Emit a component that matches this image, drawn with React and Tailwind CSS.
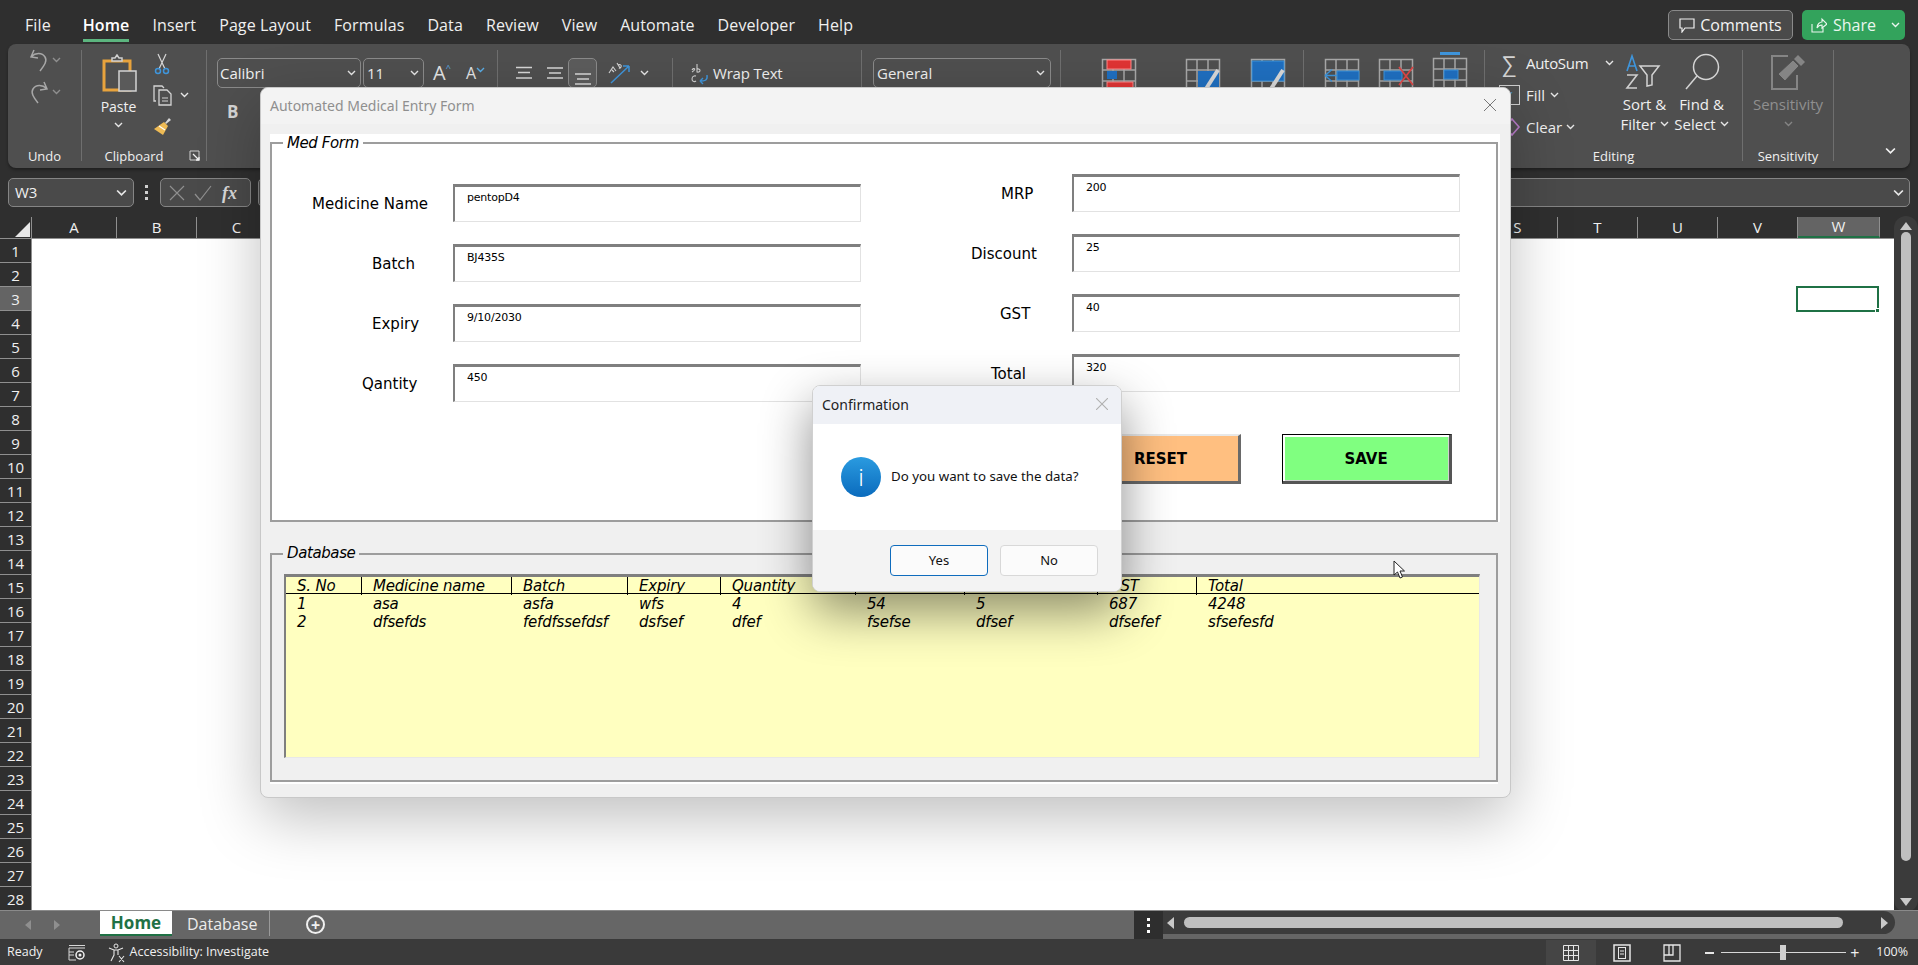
const tabs = ["File", "Home", "Insert", "Page Layout", "Formulas", "Data", "Review", "View", "Automate", "Developer", "Help"];
const columns = "ABCDEFGHIJKLMNOPQRSTUVW".split("");
const rows = Array.from({ length: 28 }, (_, i) => i + 1);

const leftFields = [
  { label: "Medicine Name", value: "pentopD4", indent: "ml-[40px]" },
  { label: "Batch", value: "BJ435S", indent: "ml-[100px]" },
  { label: "Expiry", value: "9/10/2030", indent: "ml-[100px]" },
  { label: "Qantity", value: "450", indent: "ml-[90px]" }
];
const rightFields = [
  { label: "MRP", value: "200", indent: "ml-[140px]" },
  { label: "Discount", value: "25", indent: "ml-[110px]" },
  { label: "GST", value: "40", indent: "ml-[139px]" },
  { label: "Total", value: "320", indent: "ml-[130px]" }
];
const tableHead = ["S. No", "Medicine name", "Batch", "Expiry", "Quantity", "MRP", "Discount", "GST", "Total"];
const tableRows = [
  ["1", "asa", "asfa", "wfs", "4", "54", "5", "687", "4248"],
  ["2", "dfsefds", "fefdfssefdsf", "dsfsef", "dfef", "fsefse", "dfsef", "dfsefef", "sfsefesfd"]
];

const Chevron = ({ className = "", color = "#e6e6e6" }) => (
  <svg width="9" height="6" viewBox="0 0 9 6" className={className} fill="none">
    <path d="M1 1l3.5 3.5L8 1" stroke={color} strokeWidth="1.4" />
  </svg>
);

const GridIcon = ({ children }) => (
  <svg width="38" height="36" viewBox="0 0 38 36" fill="none" className="shrink-0">
    <rect x="2.5" y="1.5" width="33" height="32" stroke="#a8a8a8" strokeWidth="1.5" />
    <path d="M2 12h34M2 23h34M13 1v33M24 1v33" stroke="#a8a8a8" strokeWidth="1.5" />
    {children}
  </svg>
);

const Group = ({ width, label, launcher, children }) => (
  <div className={`flex h-[111px] shrink-0 flex-col border-r border-[#6f6f6f] ${width}`}>
    <div className="min-h-0 flex-1">{children}</div>
    <div className="-mb-[3px] flex h-[16px] items-center text-[13px] leading-none text-[#f0f0f0]">
      <span className="flex-1 text-center">{label}</span>
      {launcher}
    </div>
  </div>
);

const Ribbon = () => (
  <div className="mx-2 flex h-[124px] shrink-0 rounded-lg bg-[#4f4f4f] pt-[6px] shadow-[0_2px_3px_rgba(0,0,0,0.35)]">
    <Group width="w-[74px]" label="Undo">
      <div className="flex h-[20px] items-center pl-[21px]">
        <svg width="20" height="24" viewBox="0 0 20 24" fill="none"><path d="M5 2L2 9l7 1M2.500 8.500C6 5 13 4 16 9c2.500 4-.5 8-5 14" stroke="#a8a8a8" strokeWidth="1.500" /></svg>
        <Chevron className="ml-[3px]" color="#8f8f8f" />
      </div>
      <div className="mt-[12px] flex h-[20px] items-center pl-[21px]">
        <svg width="20" height="24" viewBox="0 0 20 24" fill="none"><path d="M15 2l3 7-7 1M17.500 8.500C14 5 7 4 4 9c-2.500 4 .5 8 5 14" stroke="#a8a8a8" strokeWidth="1.500" /></svg>
        <Chevron className="ml-[3px]" color="#8f8f8f" />
      </div>
    </Group>
    <Group
      width="w-[125px]"
      label="Clipboard"
      launcher={
        <svg width="20" height="14" viewBox="0 0 20 14" fill="none" className="shrink-0">
          <path d="M4 2h9v9H4z" stroke="#d0d0d0" /><path d="M7 5l6 6M13 8v3h-3" stroke="#f0f0f0" strokeWidth="1.300" />
        </svg>
      }
    >
      <div className="flex">
        <div className="flex w-[73px] flex-col items-center pt-[4px]">
          <svg width="36" height="38" viewBox="0 0 36 38" fill="none" className="ml-[3px]">
            <rect x="2" y="7" width="26" height="29" stroke="#e8a33d" strokeWidth="3" fill="#4f4f4f" />
            <path d="M10 7V4h3l2-3 2 3h3v3z" stroke="#d0d0d0" strokeWidth="1.500" fill="#4f4f4f" />
            <rect x="17" y="17" width="17" height="20" fill="#5a5a5a" stroke="#d4d4d4" strokeWidth="1.500" />
          </svg>
          <span className="mt-[6px] text-[14px] leading-[18px] text-[#f0f0f0]">Paste</span>
          <Chevron className="mt-[6px]" />
        </div>
        <div className="flex flex-col items-start pt-[3px]">
          <svg width="20" height="22" viewBox="0 0 20 22" fill="none" className="-ml-[3px]">
            <path d="M6 1l7 15M14 1L7 16" stroke="#d6d6d6" strokeWidth="1.200" />
            <circle cx="6" cy="18" r="2.500" stroke="#3f95db" strokeWidth="1.500" />
            <circle cx="14" cy="18" r="2.500" stroke="#3f95db" strokeWidth="1.500" />
          </svg>
          <div className="mt-[9px] flex items-center">
            <svg width="22" height="22" viewBox="0 0 22 22" fill="none" className="-ml-[3px]">
              <path d="M4 17H2V2h8l2 2" stroke="#d4d4d4" strokeWidth="1.300" />
              <path d="M7 6h8l4 4v11H7z" fill="#4f4f4f" stroke="#d4d4d4" strokeWidth="1.300" />
              <path d="M10 14h6M10 17h6" stroke="#d4d4d4" />
            </svg>
            <Chevron className="ml-[6px]" />
          </div>
          <svg width="22" height="22" viewBox="0 0 22 22" fill="none" className="-ml-[3px] mt-[9px]">
            <path d="M13 8l4-5 2 2-5 4z" fill="#d8d8d8" />
            <path d="M12 7l4 4-5 9-9-6z" fill="#eebb55" />
            <path d="M7 11l6 4" stroke="#fff" strokeWidth="1.200" />
          </svg>
        </div>
      </div>
    </Group>
    <Group width="w-[291px]">
      <div className="flex items-center pl-[10px] pt-[8px]">
        <div className="flex h-[30px] w-[144px] items-center justify-between rounded-[5px] border border-[#8a8a8a] pl-[2px] pr-[4px] text-[15px] text-[#f0f0f0]">
          Calibri <Chevron />
        </div>
        <div className="ml-[2px] flex h-[30px] w-[61px] items-center justify-between rounded-[5px] border border-[#8a8a8a] pl-[3px] pr-[4px] text-[15px] text-[#f0f0f0]">
          11 <Chevron />
        </div>
        <div className="ml-[9px] flex w-[27px] items-start text-[20px] leading-none text-[#e4e4e4]">
          A<span className="text-[9px] leading-none text-[#5aaee8]">^</span>
        </div>
        <div className="ml-[6px] flex items-start text-[16px] leading-none text-[#e4e4e4]">
          A<Chevron className="mt-[2px]" color="#5aaee8" />
        </div>
      </div>
      <div className="pl-[20px] pt-[12px] text-[17px] font-bold leading-[24px] text-[#d4d4d4]">B</div>
    </Group>
    <Group width="w-[364px]">
      <div className="flex items-center pt-[8px]">
        <svg width="20" height="14" viewBox="0 0 20 14" fill="none" className="ml-[16px]"><path d="M2 1.500h16M4 6.500h12M2 12h16" stroke="#d6d6d6" strokeWidth="1.400" /></svg>
        <svg width="20" height="14" viewBox="0 0 20 14" fill="none" className="ml-[11px]"><path d="M2 2h16M4 7h12M2 12h16" stroke="#d6d6d6" strokeWidth="1.400" /></svg>
        <div className="ml-[3px] flex h-[30px] w-[29px] items-end justify-center rounded-[5px] border border-[#8a8a8a] bg-[#5c5c5c] pb-[1px]">
          <svg width="20" height="14" viewBox="0 0 20 14" fill="none"><path d="M2 2h16M4 7h12M2 12h16" stroke="#d6d6d6" strokeWidth="1.400" /></svg>
        </div>
        <svg width="24" height="24" viewBox="0 0 24 24" fill="none" className="ml-[11px]">
          <path d="M3 22L21 5M21 5h-6M21 5v6" stroke="#3f95db" strokeWidth="1.500" />
          <path d="M1 12l4-6 3 4M4 9l2 2M9 2l3 5M10 4c2-1 4 0 3 2s-2 1-2 1" stroke="#d6d6d6" strokeWidth="1.100" />
        </svg>
        <Chevron className="ml-[8px]" />
        <div className="ml-[23px] flex h-[30px] items-center border-l border-[#6f6f6f] pl-[18px] text-[15px] text-[#f0f0f0]">
          <svg width="18" height="24" viewBox="0 0 18 24" fill="none" className="mr-[4px]">
            <path d="M1 9c2-3 5-1 0 2M6 3v8c4 1 4-4 0-3M1 18c0-4 4-3 4-3M1 18c0 3 3 3 4 2" stroke="#cfcfcf" strokeWidth="1.100" />
            <path d="M16 14c1 6-3 6-7 6m0 0l3-3m-3 3l3 3" stroke="#3f95db" strokeWidth="1.400" />
          </svg>
          <span className="tracking-[-0.2px]">Wrap Text</span>
        </div>
      </div>
    </Group>
    <Group width="w-[199px]">
      <div className="pl-[11px] pt-[8px]">
        <div className="flex h-[30px] w-[178px] items-center justify-between rounded-[5px] border border-[#8a8a8a] pl-[3px] pr-[5px] text-[15px] text-[#f0f0f0]">
          General <Chevron />
        </div>
      </div>
    </Group>
    <Group width="w-[243px]">
      <div className="flex pt-[8px]">
        <div className="ml-[39px]">
          <GridIcon>
            <rect x="7" y="2" width="24" height="9" fill="#e03434" stroke="#ff8a8a" />
            <rect x="7" y="13" width="10" height="8" fill="#1f6fc0" />
            <rect x="7" y="24" width="26" height="10" fill="#e03434" stroke="#ff8a8a" />
          </GridIcon>
        </div>
        <div className="ml-[46px]">
          <GridIcon>
            <rect x="14" y="13" width="21" height="21" fill="#1f6fc0" />
            <path d="M20 34l14-22" stroke="#d8d8d8" strokeWidth="4" />
            <circle cx="19" cy="35" r="4" fill="#1f6fc0" />
          </GridIcon>
        </div>
        <div className="ml-[27px]">
          <GridIcon>
            <rect x="3" y="3" width="32" height="20" fill="#1f6fc0" stroke="#3f95db" />
            <path d="M20 34l14-22" stroke="#d8d8d8" strokeWidth="4" />
            <circle cx="19" cy="35" r="4" fill="#1f6fc0" />
          </GridIcon>
        </div>
      </div>
    </Group>
    <Group width="w-[181px]">
      <div className="flex pl-[19px] pt-[8px]">
        <GridIcon>
          <rect x="14" y="13" width="22" height="9" fill="#1f6fc0" stroke="#3f95db" />
          <path d="M14 17.500H2M2 17.500l7-6M2 17.500l7 6" stroke="#3f95db" strokeWidth="1.500" />
        </GridIcon>
        <div className="ml-[16px]">
          <GridIcon>
            <rect x="7" y="13" width="18" height="9" fill="#1f6fc0" stroke="#3f95db" />
            <path d="M22 9l14 18M36 9L22 27" stroke="#e04646" strokeWidth="1.700" />
          </GridIcon>
        </div>
        <div className="ml-[16px] -mt-[6px] flex flex-col">
          <span className="mx-auto mb-[2px] h-[3px] w-[20px] border-x border-[#3f95db] bg-[#3f95db]" />
          <GridIcon>
            <rect x="13" y="13" width="14" height="9" fill="#1f6fc0" stroke="#3f95db" />
          </GridIcon>
        </div>
      </div>
    </Group>
    <Group width="w-[258px]" label="Editing">
      <div className="flex">
        <div className="w-[130px] pt-[2px] text-[15px] leading-[20px] text-[#f0f0f0]">
          <div className="flex h-[22px] items-center pl-[17px]">
            <span className="w-[24px] text-[22px] leading-none text-[#d4d4d4]">∑</span>
            <span className="tracking-[-0.3px]">AutoSum</span>
            <Chevron className="ml-[17px]" />
          </div>
          <div className="mt-[10px] flex h-[22px] items-center pl-[14px]">
            <span className="mr-[6px] flex h-[20px] w-[21px] items-center justify-center border border-[#cfcfcf] text-[11px] text-[#3f95db]">✓</span>
            Fill
            <Chevron className="ml-[5px]" />
          </div>
          <div className="mt-[10px] flex h-[22px] items-center pl-[18px]">
            <svg width="18" height="20" viewBox="0 0 18 20" fill="none" className="mr-[5px]"><path d="M9 2l7 8-7 8-7-8z" stroke="#b87cc8" strokeWidth="1.600" /></svg>
            Clear
            <Chevron className="ml-[4px]" />
          </div>
        </div>
        <div className="flex w-[57px] flex-col items-center pt-[4px] text-[15px] leading-[20px] text-[#f0f0f0]">
          <svg width="40" height="36" viewBox="0 0 40 36" fill="none">
            <path d="M3 17L8 2l5 15M5 12h6" stroke="#3f95db" strokeWidth="1.600" />
            <path d="M3 21h10L3 34h10" stroke="#cfcfcf" strokeWidth="1.600" />
            <path d="M16 12h19l-7 9v10l-5 1V21z" stroke="#d4d4d4" strokeWidth="1.500" />
          </svg>
          <span className="mt-[4px] ml-[2px]">Sort &amp;</span>
          <span className="ml-[2px] flex items-center">Filter<Chevron className="ml-[4px]" /></span>
        </div>
        <div className="flex w-[57px] flex-col items-center pt-[3px] text-[15px] leading-[20px] text-[#f0f0f0]">
          <svg width="38" height="37" viewBox="0 0 38 37" fill="none">
            <circle cx="24" cy="14" r="12.500" stroke="#d4d4d4" strokeWidth="1.500" />
            <path d="M15 23L4 36" stroke="#d4d4d4" strokeWidth="1.500" />
          </svg>
          <span className="mt-[4px] ml-[2px]">Find &amp;</span>
          <span className="ml-[2px] flex items-center">Select<Chevron className="ml-[4px]" /></span>
        </div>
      </div>
    </Group>
    <Group width="w-[91px]" label="Sensitivity">
      <div className="flex flex-col items-center pt-[3px] text-[15px] leading-[20px] text-[#8f8f8f]">
        <svg width="36" height="38" viewBox="0 0 36 38" fill="none">
          <path d="M18 3H2v33h25V22" stroke="#858585" strokeWidth="2" />
          <path d="M8 21l15-14 6 6-14 15z" fill="#858585" stroke="#4f4f4f" />
          <path d="M24 6l4-4 7 7-4 4z" fill="#858585" />
        </svg>
        <span className="mt-[3px]">Sensitivity</span>
        <Chevron className="mt-[7px]" color="#858585" />
      </div>
    </Group>
    <div className="flex flex-1 items-end justify-end pb-[14px] pr-[15px]">
      <Chevron className="scale-125" color="#f0f0f0" />
    </div>
  </div>
);

const FormulaBar = () => (
  <div className="mx-2 mt-[10px] flex h-[29px] shrink-0 items-center text-[#f0f0f0]">
    <div className="flex h-full w-[126px] items-center justify-between rounded-[5px] border border-[#858585] bg-[#4a4a4a] pl-[6px] pr-[7px] text-[15px]">
      W3 <Chevron className="scale-125" />
    </div>
    <div className="ml-[11px] flex w-[4px] flex-col gap-[3px]">
      <span className="h-[3px] w-[3px] bg-[#d0d0d0]" />
      <span className="h-[3px] w-[3px] bg-[#d0d0d0]" />
      <span className="h-[3px] w-[3px] bg-[#d0d0d0]" />
    </div>
    <div className="ml-[11px] flex h-full w-[91px] items-center rounded-[5px] border border-[#858585] bg-[#4a4a4a] pl-[8px]">
      <svg width="52" height="18" viewBox="0 0 52 18" fill="none">
        <path d="M1 2l14 14M15 2L1 16" stroke="#8f8f8f" strokeWidth="1.200" />
        <path d="M26 10l5 6 11-14" stroke="#8f8f8f" strokeWidth="1.200" />
      </svg>
      <span className="ml-[1px] font-['Liberation_Serif',serif] text-[18px] font-bold italic leading-none text-[#d8d8d8]">fx</span>
    </div>
    <div className="ml-[7px] flex h-full flex-1 items-center justify-end rounded-[5px] border border-[#858585] bg-[#4a4a4a] pr-[6px]">
      <Chevron className="scale-125" />
    </div>
  </div>
);

const Sheet = () => (
  <div className="mt-[9px] flex h-[694px] shrink-0">
    <div className="flex w-[1894px] flex-col">
      <div className="flex h-[23px] shrink-0 border-b border-[#8f8f8f] pt-[1px] text-[15px] leading-none text-[#f0f0f0]">
        <div className="flex w-[32px] shrink-0 items-end justify-end border-r border-[#8f8f8f] pb-[1px] pr-[1px]">
          <span className="h-0 w-0 border-b-[15px] border-l-[15px] border-b-[#e8e8e8] border-l-transparent" />
        </div>
        {columns.map((name) =>
          name === "W" ? (
            <div key={name} className="flex w-[82px] shrink-0 items-center justify-center border-b-2 border-r border-b-[#1f7145] border-r-[#8f8f8f] bg-[#646464]">
              {name}
            </div>
          ) : (
            <div key={name} className={`flex shrink-0 items-center justify-center border-r border-[#8f8f8f] ${name === "A" ? "w-[85px]" : "w-[80.050px]"}`}>
              {name}
            </div>
          )
        )}
      </div>
      <div className="flex min-h-0 flex-1">
        <div className="w-[32px] shrink-0 border-r border-[#8f8f8f] text-[15px] leading-none text-[#f0f0f0]">
          {rows.map((row) => (
            <div key={row} className={`flex h-[24px] items-center justify-center border-b border-[#8f8f8f] pt-[1px] ${row === 3 ? "bg-[#646464]" : ""}`}>
              {row}
            </div>
          ))}
        </div>
        <div className="relative flex-1 bg-white">
          <div className="absolute left-[1764px] top-[47px] h-[26px] w-[83px] border-2 border-[#1f7145]">
            <span className="absolute -bottom-[3px] -right-[3px] h-[5px] w-[5px] border border-white bg-[#1f7145]" />
          </div>
        </div>
      </div>
    </div>
    <div className="flex h-[696px] flex-1 flex-col items-center rounded-full bg-[#3b3b3b] py-[6px]">
      <span className="h-0 w-0 border-x-[6px] border-b-[8px] border-x-transparent border-b-[#c8c8c8]" />
      <span className="mt-[2px] h-[629px] w-[10px] rounded-full bg-[#bfbfbf]" />
      <span className="mt-auto h-0 w-0 border-x-[6px] border-t-[8px] border-x-transparent border-t-[#c8c8c8]" />
    </div>
  </div>
);

const TabBar = () => (
  <div className="flex h-[29px] shrink-0 border-t border-[#8a8a8a] bg-[#666666]">
    <div className="flex w-[1134px] shrink-0 items-start">
      <span className="ml-[25px] mt-[9px] h-0 w-0 border-y-[5px] border-r-[6px] border-y-transparent border-r-[#8f8f8f]" />
      <span className="ml-[23px] mt-[9px] h-0 w-0 border-y-[5px] border-l-[6px] border-y-transparent border-l-[#8f8f8f]" />
      <div className="ml-[40px] flex h-[25px] w-[72px] items-center justify-center border-b-2 border-[#1f7145] bg-white text-[17px] font-bold text-[#1f7145]">Home</div>
      <div className="flex h-[25px] w-[98px] items-center border-r border-[#9a9a9a] pl-[15px] text-[16px] text-[#ececec]">Database</div>
      <span className="ml-[36px] mt-[4px] flex h-[19px] w-[19px] items-center justify-center rounded-full border-2 border-[#f0f0f0] text-[16px] font-bold leading-none text-[#f0f0f0]">+</span>
    </div>
    <div className="flex h-full w-[29px] shrink-0 flex-col items-center justify-center gap-[3px] bg-[#2e2e2e]">
      <span className="h-[3px] w-[3px] bg-white" />
      <span className="h-[3px] w-[3px] bg-white" />
      <span className="h-[3px] w-[3px] bg-white" />
    </div>
    <div className="flex h-[23px] w-[732px] shrink-0 items-center rounded-r-full bg-[#3c3c3c] px-[4px]">
      <span className="h-0 w-0 border-y-[6px] border-r-[7px] border-y-transparent border-r-[#c8c8c8]" />
      <span className="ml-[10px] h-[11px] w-[659px] rounded-full bg-[#bfbfbf]" />
      <span className="ml-auto mr-[3px] h-0 w-0 border-y-[6px] border-l-[7px] border-y-transparent border-l-[#c8c8c8]" />
    </div>
  </div>
);

const StatusBar = () => (
  <div className="flex h-[26px] shrink-0 items-center bg-[#3a3a3a] pt-[1px] text-[12.500px] text-[#f0f0f0]">
    <span className="ml-[7px]">Ready</span>
    <svg width="18" height="17" viewBox="0 0 18 17" fill="none" className="ml-[25px]">
      <path d="M1 1.500h16M1 4h16M1 4v12h7M1 8h5M1 11h5" stroke="#d6d6d6" />
      <circle cx="12" cy="11" r="4" stroke="#f0f0f0" strokeWidth="1.500" /><circle cx="12" cy="11" r="1.500" fill="#f0f0f0" />
    </svg>
    <svg width="20" height="20" viewBox="0 0 20 20" fill="none" className="ml-[21px]">
      <circle cx="9" cy="3" r="2" stroke="#e6e6e6" />
      <path d="M2 5l5 2h4l5-2M7 7v5l-3 6M11 7v5M12 13l5 6M17 13l-5 6" stroke="#e6e6e6" strokeWidth="1.100" />
    </svg>
    <span className="ml-[3px]">Accessibility: Investigate</span>
    <div className="ml-[1277px] flex h-full w-[50px] items-center justify-center bg-[#454545]">
      <svg width="16" height="16" viewBox="0 0 16 16" fill="none"><path d="M.5.5h15v15H.5zM5.500.5v15M10.500.5v15M.5 5.500h15M.5 10.500h15" stroke="#e6e6e6" /></svg>
    </div>
    <svg width="18" height="18" viewBox="0 0 18 18" fill="none" className="ml-[17px]"><rect x="1" y="1" width="16" height="16" stroke="#e6e6e6" strokeWidth="1.500" /><rect x="5.500" y="3.500" width="7" height="11" stroke="#e6e6e6" /><path d="M7 7h4M7 10h4" stroke="#e6e6e6" /></svg>
    <svg width="18" height="18" viewBox="0 0 18 18" fill="none" className="ml-[32px]"><path d="M1 1h16v16H1zM1 11h9V1M6 1v10" stroke="#e6e6e6" strokeWidth="1.300" /></svg>
    <span className="ml-[24px] h-[2px] w-[9px] bg-[#e6e6e6]" />
    <div className="relative ml-[7px] h-[1px] w-[125px] bg-[#d8d8d8]">
      <span className="absolute left-[59px] top-[-7px] h-[15px] w-[6px] bg-[#d0d0d0]" />
    </div>
    <span className="ml-[4px] text-[16px] leading-none">+</span>
    <span className="ml-[17px]">100%</span>
  </div>
);

const InputBox = ({ value, width }) => (
  <div className={`ml-auto h-[38px] border-b border-l-2 border-r border-t-[3px] border-b-[#e2e2e2] border-l-[#7f7f7f] border-r-[#e2e2e2] border-t-[#7f7f7f] bg-white pl-[12px] pt-[4px] text-[11px] leading-[14px] tracking-[-0.2px] text-black ${width}`}>
    {value}
  </div>
);

const FormWindow = () => (
  <div className="absolute left-[260px] top-[87px] h-[711px] w-[1251px] rounded-lg border border-[#c8c8c8] bg-[#f0f0f0] font-['DejaVu_Sans',sans-serif] shadow-[0_20px_60px_rgba(0,0,0,0.25)]">
    <div className="flex h-[36px] items-center justify-between rounded-t-lg bg-[#f3f3f3] pb-[2px] pl-[9px] pr-[13px] font-['Noto_Sans',sans-serif] text-[14px] text-[#8f8f8f]">
      Automated Medical Entry Form
      <svg width="14" height="14" viewBox="0 0 14 14" fill="none"><path d="M1 1l12 12M13 1L1 13" stroke="#777" /></svg>
    </div>
    <div className="mx-[9px] mt-[10px] h-[388px] w-[1230px] bg-white pt-[8px]">
      <div className="relative flex h-[380px] w-[1228px] border-2 border-[#9d9d9d] text-[15px] text-black">
        <span className="absolute -top-[10px] left-[11px] bg-white px-[4px] text-[15px] italic leading-[18px] tracking-[-0.4px]">Med Form</span>
        <div className="flex w-[589px] shrink-0 flex-col gap-[22px] pt-[40px]">
          {leftFields.map((field) => (
            <div key={field.label} className="flex items-center">
              <span className={`pt-[2px] ${field.indent}`}>{field.label}</span>
              <InputBox value={field.value} width="w-[408px]" />
            </div>
          ))}
        </div>
        <div className="flex w-[599px] shrink-0 flex-col gap-[22px] pt-[30px]">
          {rightFields.map((field) => (
            <div key={field.label} className="flex items-center">
              <span className={`pt-[2px] ${field.indent}`}>{field.label}</span>
              <InputBox value={field.value} width="w-[388px]" />
            </div>
          ))}
          <div className="mt-[20px] flex justify-end gap-[41px] pr-[8px]">
            <button className="h-[50px] w-[170px] border-b-[3px] border-l border-r-[3px] border-t-2 border-b-[#696969] border-l-[#e8e8e8] border-r-[#696969] border-t-[#e8e8e8] bg-[#ffbf80] pl-[11px] pt-[2px] text-[15px] font-bold">RESET</button>
            <button className="h-[50px] w-[170px] border-b-[3px] border-l border-r-[3px] border-t border-b-[#555555] border-l-black border-r-[#555555] border-t-black bg-[#80ff80] pt-[2px] text-[15px] font-bold shadow-[inset_2px_2px_0_#ffffff,inset_-1px_-1px_0_#d0d0d0]">SAVE</button>
          </div>
        </div>
      </div>
    </div>
    <div className="relative mx-[9px] mt-[31px] h-[229px] w-[1228px] border-2 border-[#9d9d9d] pl-[12px] pt-[19px] shadow-[0_2px_0_#ffffff]">
      <span className="absolute -top-[11px] left-[11px] bg-[#f0f0f0] px-[4px] text-[15px] italic leading-[18px] tracking-[-0.4px] text-black">Database</span>
      <div className="h-[184px] w-[1196px] border-b border-l-2 border-r border-t-[3px] border-b-[#e8e8e8] border-l-[#7f7f7f] border-r-[#e8e8e8] border-t-[#7f7f7f] bg-[#ffffc0] text-[15px] italic leading-[18px] tracking-[-0.2px] text-black">
        <div className="grid h-[17px] grid-cols-[76px_150px_116px_93px_135px_109px_133px_99px_1fr] border-b border-black">
          {tableHead.map((cell) => (
            <div key={cell} className="border-r border-black pl-[11px] last:border-r-0">{cell}</div>
          ))}
        </div>
        <div className="pt-[1px]">
          {tableRows.map((row) => (
            <div key={row[0]} className="grid grid-cols-[76px_150px_116px_93px_135px_109px_133px_99px_1fr]">
              {row.map((cell, i) => (
                <div key={i} className="pl-[11px]">{cell}</div>
              ))}
            </div>
          ))}
        </div>
      </div>
    </div>
  </div>
);

const Dialog = () => (
  <div className="absolute left-[812px] top-[385px] flex h-[207px] w-[310px] flex-col overflow-hidden rounded-lg border border-[#d0d0d0] bg-white font-['Noto_Sans',sans-serif] shadow-[0_20px_50px_rgba(0,0,0,0.45)]">
    <div className="flex h-[38px] shrink-0 items-center justify-between bg-[#eff1f6] pb-[2px] pl-[9px] pr-[13px] text-[14px] text-[#222222]">
      Confirmation
      <svg width="12" height="12" viewBox="0 0 12 12" fill="none"><path d="M0 0l12 12M12 0L0 12" stroke="#b0b0b0" strokeWidth="1.100" /></svg>
    </div>
    <div className="flex h-[106px] shrink-0 items-center pl-[28px] text-[13.300px] text-[#111111]">
      <span className="flex h-[40px] w-[40px] items-center justify-center rounded-full bg-gradient-to-b from-[#2a9be0] to-[#0a6bbd] text-[24px] font-light leading-none text-white">i</span>
      <span className="ml-[10px]">Do you want to save the data?</span>
    </div>
    <div className="flex flex-1 justify-end gap-[12px] bg-[#f3f3f3] pr-[23px] pt-[15px] text-[13px] text-[#111111]">
      <button className="h-[31px] w-[98px] rounded-[4px] border border-[#0f6cbd] bg-[#fbfbfb]">Yes</button>
      <button className="h-[31px] w-[98px] rounded-[4px] border border-[#d8d8d8] bg-[#fbfbfb]">No</button>
    </div>
  </div>
);

export default function App() {
  return (
    <div className="relative flex h-[965px] w-[1918px] flex-col overflow-hidden bg-[#2f2f2f] font-['Open_Sans',sans-serif]">
      <div className="flex h-[44px] shrink-0 items-start">
        <nav className="flex pl-[25px] pt-[15px] text-[16px] leading-[20px] tracking-[0.1px] text-[#f0f0f0]">
          {tabs.map((tab) =>
            tab === "Home" ? (
              <span key={tab} className="relative ml-[32px] font-semibold text-white">
                {tab}
                <span className="absolute inset-x-0 top-[24px] h-[3px] bg-[#5cb57f]" />
              </span>
            ) : (
              <span key={tab} className={tab === "File" ? "" : "ml-[23px]"}>{tab}</span>
            )
          )}
        </nav>
        <div className="ml-auto flex gap-[9px] pr-[13px] pt-[10px] text-[16px] text-[#f4f4f4]">
          <div className="flex h-[30px] w-[125px] items-center justify-center rounded-[5px] border border-[#8a8a8a] bg-[#4a4a4a]">
            <svg width="16" height="16" viewBox="0 0 16 16" fill="none" className="mr-[5px]"><path d="M1 2h14v9H6l-3 4v-4H1z" stroke="#f0f0f0" strokeWidth="1.200" /></svg>
            Comments
          </div>
          <div className="flex h-[30px] w-[103px] items-center rounded-[5px] bg-[#33a35c] pl-[9px] text-[#eaf6ee]">
            <svg width="16" height="16" viewBox="0 0 16 16" fill="none" className="mr-[6px]"><path d="M1 7v8h11v-4M6 11c0-4 3-6 5-6V2l5 5-5 4V8c-2 0-4 1-5 3z" stroke="#eaf6ee" strokeWidth="1.100" /></svg>
            Share
            <Chevron className="ml-[15px]" color="#eaf6ee" />
          </div>
        </div>
      </div>
      <Ribbon />
      <FormulaBar />
      <Sheet />
      <TabBar />
      <StatusBar />
      <FormWindow />
      <Dialog />
      <svg width="13" height="19" viewBox="0 0 13 19" className="absolute left-[1393px] top-[560px]">
        <path d="M1 1v14l3.500-3 2.500 6 2.500-1-2.500-6h4.500z" fill="#fff" stroke="#222" />
      </svg>
    </div>
  );
}
